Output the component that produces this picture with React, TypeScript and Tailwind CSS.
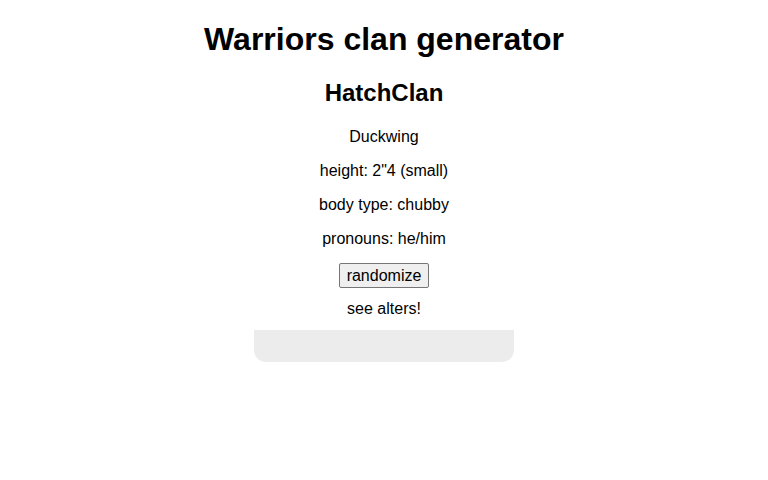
import React, { useState } from 'react';

type Cat = {
  name: string;
  height: string;
  body: string;
  pronouns: string;
};

const cats: Cat[] = [
  { name: 'Duckwing', height: '2"4 (small)', body: 'chubby', pronouns: 'he/him' },
  { name: 'Mossfall', height: '2"9 (medium)', body: 'lanky', pronouns: 'she/her' },
  { name: 'Emberstep', height: '3"1 (large)', body: 'muscular', pronouns: 'they/them' },
];

const App: React.FC = () => {
  const [index, setIndex] = useState(0);
  const cat = cats[index];

  const randomize = () => {
    setIndex((i) => (i + 1 + Math.floor(Math.random() * (cats.length - 1))) % cats.length);
  };

  return (
    <div className="min-h-screen bg-white text-black flex flex-col items-center pt-[21px] font-['Liberation_Sans',Arial,sans-serif]">
      <h1 className="text-[32px] leading-[37px] font-bold">Warriors clan generator</h1>
      <h2 className="mt-[21px] text-[24px] leading-[28px] font-bold">HatchClan</h2>

      <p className="mt-[21px] text-[16px] leading-[18px]">{cat.name}</p>
      <p className="mt-4 text-[16px] leading-[18px]">height: {cat.height}</p>
      <p className="mt-4 text-[16px] leading-[18px]">body type: {cat.body}</p>
      <p className="mt-4 text-[16px] leading-[18px]">pronouns: {cat.pronouns}</p>

      <button
        onClick={randomize}
        className="mt-[15px] h-[25px] px-[7px] text-[16px] leading-[18px] bg-[#efefef] border border-[#767676] rounded-[2px] text-black"
      >
        randomize
      </button>

      <p className="mt-[12px] text-[16px] leading-[18px]">see alters!</p>

      <div className="mt-[12px] w-[260px] h-[32px] bg-[#ececec] rounded-b-[12px]"></div>
    </div>
  );
};

export default App;
